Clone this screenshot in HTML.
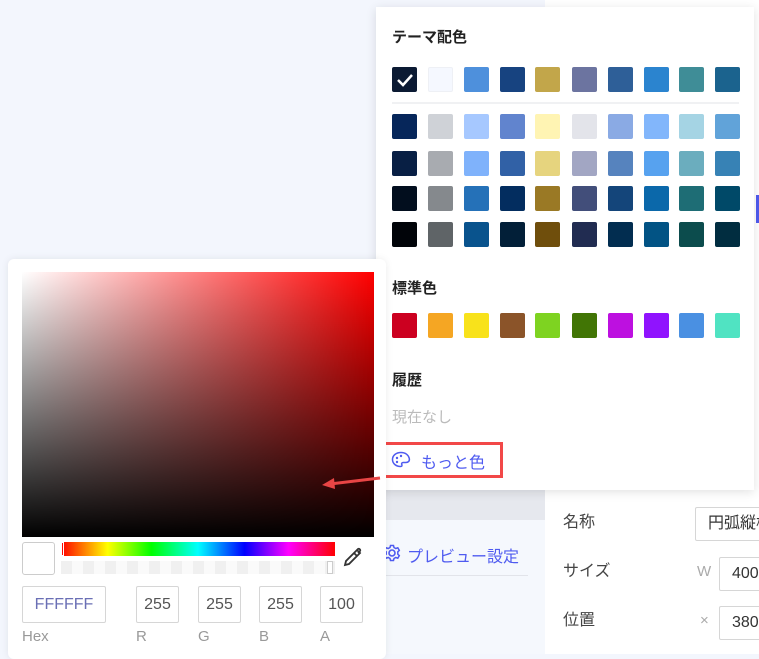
<!DOCTYPE html>
<html><head><meta charset="utf-8"><style>
*{margin:0;padding:0;box-sizing:border-box}
body{width:759px;height:654px;overflow:hidden;position:relative;background:#f3f6fd;font-family:"Liberation Sans","Noto Sans CJK JP",sans-serif}
.a{position:absolute}
.sw{position:absolute;width:25px;height:25px;border-radius:2px}
.t{font-size:15px;font-weight:bold;color:#222}
.inp{position:absolute;height:37px;border:1px solid #d6d6d6;border-radius:2px;background:#fff;font-size:16px;color:#555;text-align:center;line-height:35px}
.lbl{position:absolute;font-size:15px;color:#999;top:628px}
</style></head><body>
<div class="a" style="left:545px;top:0;width:214px;height:654px;background:#fff"></div>
<div class="a" style="left:386px;top:490px;width:159px;height:30px;background:#e6e8ee"></div>
<div class="a" style="left:386px;top:520px;width:159px;height:134px;background:#f5f8fd"></div>
<div class="a" style="left:386px;top:575px;width:142px;height:1px;background:#e2e4ea"></div>
<svg class="a" style="left:383px;top:544px" width="18" height="18" viewBox="0 0 18 18"><circle cx="9" cy="9" r="3" fill="none" stroke="#4f5bf0" stroke-width="1.6"/><path d="M7.5 1.5h3l.5 2 1.8 1 2-.7 1.5 2.6-1.5 1.4v2.4l1.5 1.4-1.5 2.6-2-.7-1.8 1-.5 2h-3l-.5-2-1.8-1-2 .7-1.5-2.6 1.5-1.4V7.8L1.7 6.4l1.5-2.6 2 .7 1.8-1z" fill="none" stroke="#4f5bf0" stroke-width="1.5"/></svg>
<div class="a" style="left:407px;top:543px;font-size:16px;color:#4f5bf0;">プレビュー設定</div>
<div class="a" style="left:563px;top:508px;font-size:16px;color:#444">名称</div>
<div class="inp" style="left:695px;top:507px;width:80px;height:34px;text-align:left;padding-left:12px;line-height:32px;color:#333">円弧縦棒</div>
<div class="a" style="left:563px;top:557px;font-size:16px;color:#444">サイズ</div>
<div class="a" style="left:697px;top:563px;font-size:15px;color:#aaa">W</div>
<div class="inp" style="left:719px;top:557px;width:60px;height:34px;text-align:left;padding-left:12px;line-height:32px;color:#333">400</div>
<div class="a" style="left:563px;top:606px;font-size:16px;color:#444">位置</div>
<div class="a" style="left:700px;top:612px;font-size:15px;color:#aaa">×</div>
<div class="inp" style="left:719px;top:606px;width:60px;height:34px;text-align:left;padding-left:12px;line-height:32px;color:#333">380</div>
<div class="a" style="left:756px;top:195px;width:3px;height:28px;background:#4f5bf0"></div>

<div class="a" style="left:376px;top:7px;width:378px;height:483px;background:#fff;box-shadow:0 2px 10px rgba(0,0,0,.12)"></div>
<div class="a t" style="left:392px;top:26px">テーマ配色</div>
<div class="a" style="left:392px;top:102px;width:347px;height:2px;background:#f0f1f3"></div>
<div class="a t" style="left:392px;top:277px">標準色</div>
<div class="a t" style="left:392px;top:369px">履歴</div>
<div class="a" style="left:392px;top:406px;font-size:15px;color:#bbb">現在なし</div>
<div class="a" style="left:381px;top:442px;width:122px;height:36px;border:3px solid #f24848"></div>
<svg class="a" style="left:391px;top:451px" width="20" height="17" viewBox="0 0 20 17"><path d="M10 1.5C5 1.5 1.5 4.5 1.5 8.5s3.5 7 8 7c1.5 0 1.8-1 1.3-2-.5-1 0-2 1.5-2h2.5c2.5 0 4-1.5 3.5-4C17.5 4 14.5 1.5 10 1.5z" fill="none" stroke="#4f5bf0" stroke-width="1.5"/><circle cx="6" cy="7" r="1.2" fill="#4f5bf0"/><circle cx="10" cy="5" r="1.2" fill="#4f5bf0"/><circle cx="6" cy="11" r="1.2" fill="#4f5bf0"/></svg>
<div class="a" style="left:421px;top:449px;font-size:16px;color:#4f5bf0">もっと色</div>
<div id="sw"></div>

<div class="a" style="left:8px;top:259px;width:378px;height:400px;background:#fff;border-radius:6px;box-shadow:0 0 8px rgba(0,0,0,.08)"></div>
<div class="a" style="left:22px;top:272px;width:352px;height:265px;background:linear-gradient(to top,#000,rgba(0,0,0,0)),linear-gradient(to right,#fff,#f00)"></div>
<div class="a" style="left:22px;top:542px;width:33px;height:33px;border:1px solid #ccc;border-radius:3px;background:#fff"></div>
<div class="a" style="left:61px;top:542px;width:274px;height:14px;background:linear-gradient(to right,#f00,#ff0 17%,#0f0 33%,#0ff 50%,#00f 67%,#f0f 83%,#f00)"></div>
<div class="a" style="left:61px;top:542px;width:3px;height:14px;border:1px solid #fff"></div>
<div class="a" style="left:61px;top:561px;width:274px;height:13px;background:repeating-linear-gradient(90deg,#f0f0f0 0 11px,#fafafa 11px 22px)"></div>
<div class="a" style="left:327px;top:561px;width:6px;height:13px;border:1px solid #ccc;background:#fff"></div>
<svg class="a" style="left:342px;top:546px" width="22" height="22" viewBox="0 0 22 22"><path d="M3 19l1-4 8-8 3 3-8 8z M12 7l3-3 3 3-3 3z M14 5l2-2c1-1 3 1 2 2l-2 2" fill="none" stroke="#333" stroke-width="1.8"/></svg>
<div class="inp" style="left:22px;top:586px;width:84px;color:#6a6fb5">FFFFFF</div>
<div class="inp" style="left:136px;top:586px;width:43px">255</div>
<div class="inp" style="left:198px;top:586px;width:43px">255</div>
<div class="inp" style="left:259px;top:586px;width:43px">255</div>
<div class="inp" style="left:320px;top:586px;width:43px">100</div>
<div class="lbl" style="left:22px">Hex</div>
<div class="lbl" style="left:136px">R</div>
<div class="lbl" style="left:198px">G</div>
<div class="lbl" style="left:259px">B</div>
<div class="lbl" style="left:320px">A</div>
<svg class="a" style="left:320px;top:472px" width="62" height="20"><path d="M60 6L10 12" stroke="#e84545" stroke-width="3"/><path d="M2 13l12-7 1 11z" fill="#e84545"/></svg>

<script>
var xs=[392,428,464,500,535,572,608,644,679,715];
var rows=[[67,["#0b1a33","#f5f8ff","#4e90dc","#174380","#c2a64a","#6c74a0","#2e5f98","#2b84cf","#3f8d97","#1b638e"]],
[114,["#06265a","#cfd2d7","#a6c8ff","#6184ce","#fff4b3","#e3e4ea","#8aaae4","#82b6fb","#a5d4e4","#61a3d9"]],
[151,["#081f44","#a8abb0","#7fb2fb","#3161a6","#e6d47e","#a2a6c3","#5683be","#57a2ef","#6badbe","#3782b5"]],
[186,["#020e1e","#85898d","#2571b8","#032d5f","#9a7925","#424e7a","#14457a","#0b68aa","#1e6d75","#004968"]],
[222,["#010409","#5f6467","#09538d","#021f38","#6f4e0c","#212c51","#022d50","#025384","#0c4c4d","#012d40"]],
[313,["#cc0020","#f5a623","#f8e21b","#8b5429","#7ed321","#417505","#bd10e0","#9013fe","#4a90e2","#50e3c2"]]];
var h="";rows.forEach(function(r){r[1].forEach(function(c,i){h+='<div class="sw" style="left:'+xs[i]+'px;top:'+r[0]+'px;background:'+c+';'+(c=="#f5f8ff"?'border:1px solid #eef0f5;':'')+'"></div>';});});
h+='<svg class="a" style="left:395px;top:71px" width="20" height="18"><path d="M3 9l5 5 9-10" fill="none" stroke="#fff" stroke-width="2.5"/></svg>';
document.getElementById("sw").outerHTML=h;
</script>
</body></html>
